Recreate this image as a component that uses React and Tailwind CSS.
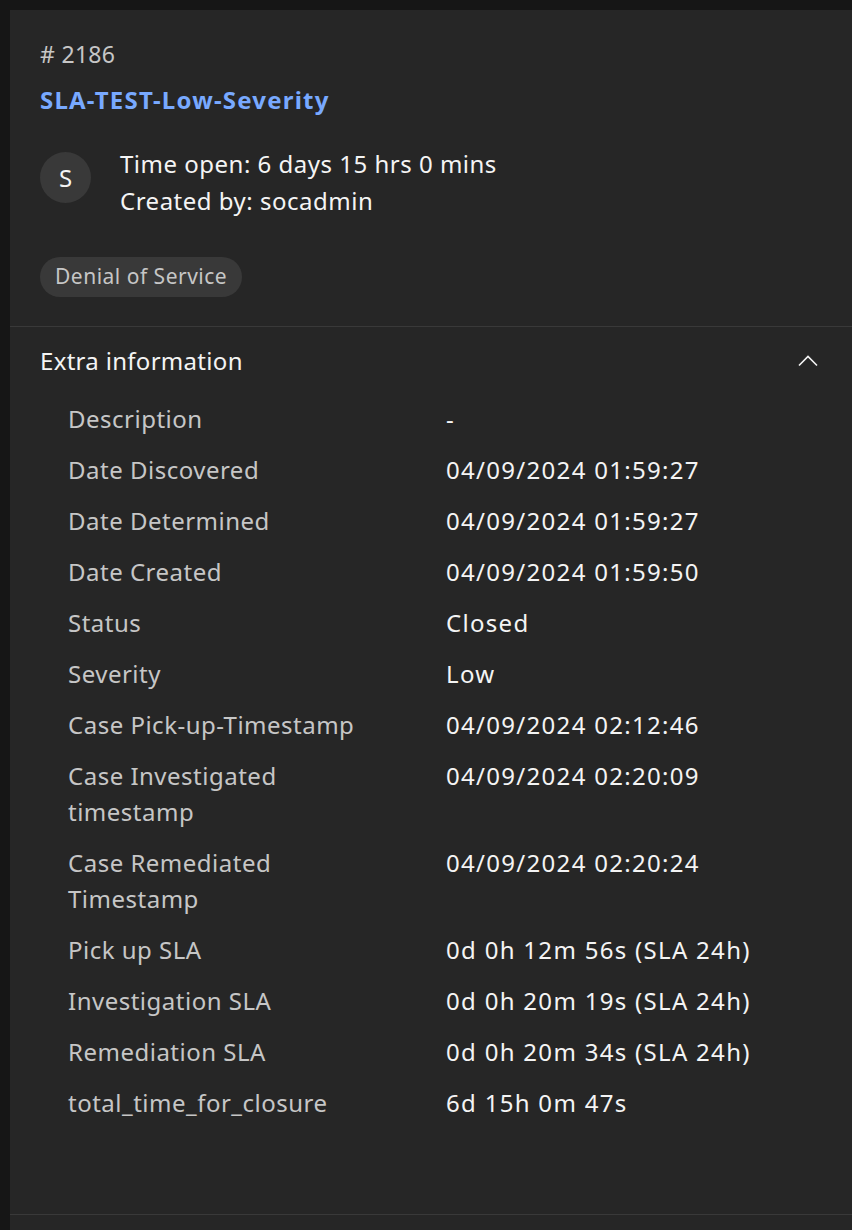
import React from "react";

const rows = [
  ["Description", "-"],
  ["Date Discovered", "04/09/2024 01:59:27"],
  ["Date Determined", "04/09/2024 01:59:27"],
  ["Date Created", "04/09/2024 01:59:50"],
  ["Status", "Closed"],
  ["Severity", "Low"],
  ["Case Pick-up-Timestamp", "04/09/2024 02:12:46"],
  ["Case Investigated timestamp", "04/09/2024 02:20:09"],
  ["Case Remediated Timestamp", "04/09/2024 02:20:24"],
  ["Pick up SLA", "0d 0h 12m 56s (SLA 24h)"],
  ["Investigation SLA", "0d 0h 20m 19s (SLA 24h)"],
  ["Remediation SLA", "0d 0h 20m 34s (SLA 24h)"],
  ["total_time_for_closure", "6d 15h 0m 47s"],
];

function ChevronUp() {
  return (
    <svg width="20" height="12" viewBox="0 0 20 12" fill="none">
      <path d="M1 10.5 L10 1.5 L19 10.5" stroke="#f4f4f4" strokeWidth="1.6" />
    </svg>
  );
}

export default function App() {
  return (
    <div
      className="min-h-screen bg-[#161616] pl-[10px] pt-[10px]"
      style={{ fontFamily: "'Noto Sans', 'Open Sans', sans-serif" }}
    >
      <div className="bg-[#262626] h-[1220px] flex flex-col">
        {/* Header */}
        <div className="px-[30px] pt-[26px] pb-[29px]">
          <div className="text-[23px] leading-[36px] tracking-[0.3px] text-[#c6c6c6]">
            # 2186
          </div>
          <div className="mt-[10px] text-[24px] leading-[36px] font-bold tracking-[1.2px] text-[#78a9ff]">
            SLA-TEST-Low-Severity
          </div>

          <div className="mt-[27px] flex items-start gap-[29px]">
            <div className="mt-[7px] w-[51px] h-[51px] rounded-full bg-[#393939] flex items-center justify-center text-[24px] text-[#f4f4f4]">
              S
            </div>
            <div className="text-[24px] leading-[37px] tracking-[0.5px] text-[#f4f4f4]">
              <div>Time open: 6 days 15 hrs 0 mins</div>
              <div>Created by: socadmin</div>
            </div>
          </div>

          <div className="mt-[38px] inline-flex items-center h-[40px] px-[15px] rounded-full bg-[#393939] text-[21px] tracking-[0.5px] text-[#c6c6c6]">
            Denial of Service
          </div>
        </div>

        {/* Extra information */}
        <div className="border-t border-b border-[#393939] pt-[16px] pb-[78px]">
          <div className="flex items-center justify-between pl-[30px] pr-[34px] h-[36px]">
            <span className="text-[24px] tracking-[0.3px] text-[#f4f4f4]">
              Extra information
            </span>
            <ChevronUp />
          </div>

          <div className="mt-[22px] pl-[58px]">
            {rows.map(([label, value]) => (
              <div key={label} className="flex pb-[15px] text-[24px] leading-[36px]">
                <div className="w-[378px] shrink-0 pr-[60px] tracking-[0.5px] text-[#c6c6c6]">
                  {label}
                </div>
                <div className="tracking-[1.3px] text-[#f4f4f4]">{value}</div>
              </div>
            ))}
          </div>
        </div>
      </div>
    </div>
  );
}
